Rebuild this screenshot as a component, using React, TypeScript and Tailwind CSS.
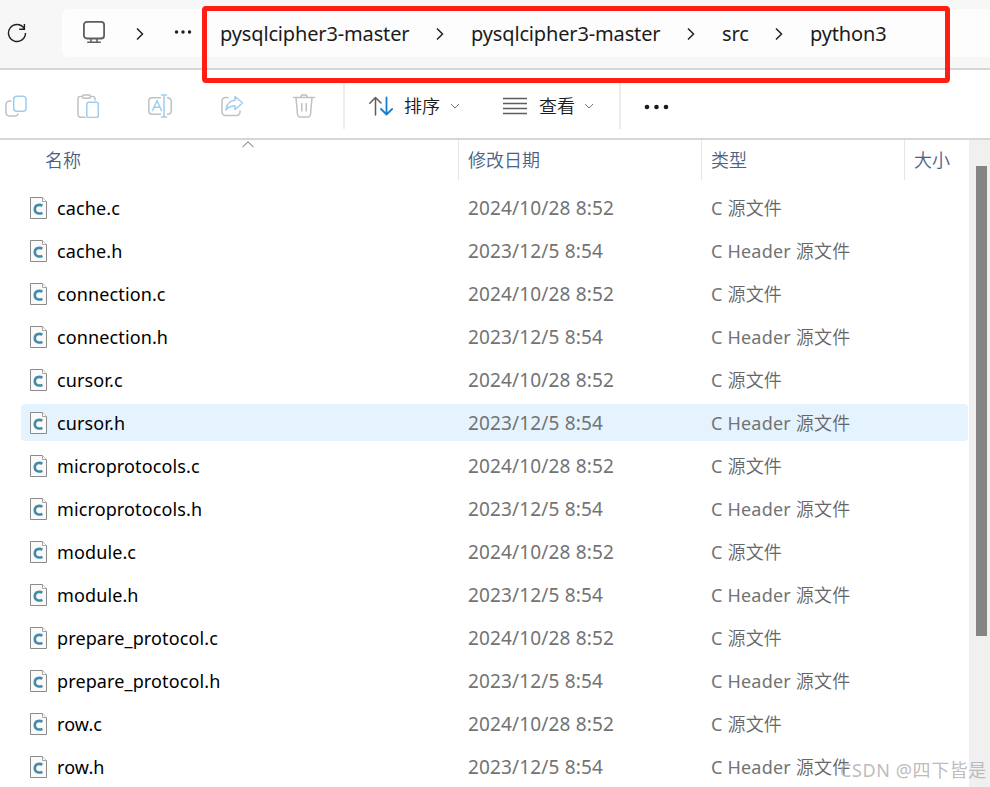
import type { ReactNode } from 'react';

const CRUMBS = [
  { label: 'pysqlcipher3-master', label_w: 'w-[189px]', gap: 'w-[62px]' },
  { label: 'pysqlcipher3-master', label_w: 'w-[189px]', gap: 'w-[62px]' },
  { label: 'src', label_w: 'w-[26px]', gap: 'w-[62px]' },
  { label: 'python3', label_w: 'w-[77px]', gap: '' },
];

const MODULES = [
  'cache',
  'connection',
  'cursor',
  'microprotocols',
  'module',
  'prepare_protocol',
  'row',
];

const FILES = MODULES.flatMap((name) => [
  { name: `${name}.c`, date: '2024/10/28 8:52', lang: 'C ' },
  { name: `${name}.h`, date: '2023/12/5 8:54', lang: 'C Header ' },
]);

function Icon({ className = '', children }: { className?: string; children: ReactNode }) {
  return (
    <svg
      width="24"
      height="24"
      viewBox="0 0 24 24"
      fill="none"
      stroke="#c1c1c1"
      strokeWidth="1.5"
      strokeLinecap="round"
      strokeLinejoin="round"
      className={`shrink-0 ${className}`}
    >
      {children}
    </svg>
  );
}

function CrumbArrow() {
  return (
    <svg width="8" height="14" viewBox="0 0 8 14" fill="none" stroke="#222" strokeWidth="1.5" className="shrink-0">
      <path d="M1 1.5 6.5 7 1 12.5" />
    </svg>
  );
}

function DropArrow() {
  return (
    <svg width="10" height="6" viewBox="0 0 10 6" fill="none" stroke="#777" strokeWidth="1" className="shrink-0">
      <path d="M1 1 5 5 9 1" />
    </svg>
  );
}

function FileIcon() {
  return (
    <svg width="17" height="22" viewBox="0 0 17 22" className="shrink-0">
      <path d="M.5.5H12.5L16.5 4.5V21.5H.5Z" fill="#fafafa" stroke="#8b8b8b" />
      <path d="M12.5.5V4.5H16.5" fill="#fff" stroke="#a5a5a5" />
      <path
        d="M12.4 8.6C9 6.9 4.8 8.2 4.8 12.2 4.8 16.2 9 17.5 12.4 15.8"
        fill="none"
        stroke="#448aa9"
        strokeWidth="2.6"
      />
    </svg>
  );
}

function AddressBar() {
  return (
    <header className="flex h-[70px] shrink-0 border-b-2 border-[#d6d6d6] bg-[#f7f7f7] pt-[9px]">
      <div className="w-[62px] shrink-0 pt-[13px] pl-[6px]">
        <svg width="22" height="22" viewBox="0 0 22 22" fill="none" stroke="#1f1f1f" strokeWidth="1.4">
          <path d="M18 6.2A8.5 8.5 0 1 0 19.5 11M18.4 2V7.2H13.2" />
        </svg>
      </div>
      <div className="flex h-12 flex-1 items-center rounded-l-md bg-[#fdfdfd] pl-5">
        <svg
          width="24"
          height="24"
          viewBox="0 0 24 24"
          fill="none"
          stroke="#5e5e5e"
          strokeWidth="1.8"
          className="relative -top-px shrink-0"
        >
          <rect x="1.9" y="1.9" width="20.2" height="16.6" rx="3" />
          <path d="M9 18.5V22M15 18.5V22M5.2 22.2H18.8" strokeWidth="1.5" />
        </svg>
        <div className="flex w-[67px] justify-center pt-[2px]">
          <CrumbArrow />
        </div>
        <svg width="18" height="4" viewBox="0 0 18 4" fill="#1b1b1b" className="relative -top-px mr-[28px] ml-px shrink-0">
          <circle cx="2.5" cy="2" r="1.7" />
          <circle cx="9" cy="2" r="1.7" />
          <circle cx="15.5" cy="2" r="1.7" />
        </svg>
        {CRUMBS.map((crumb, i) => (
          <div key={i} className="flex items-center pt-[2px]">
            <span className={`${crumb.label_w} whitespace-nowrap text-[20px] tracking-[-0.15px] text-[#1b1b1b]`}>
              {crumb.label}
            </span>
            {crumb.gap && (
              <div className={`${crumb.gap} flex justify-center pr-px`}>
                <CrumbArrow />
              </div>
            )}
          </div>
        ))}
      </div>
    </header>
  );
}

function Toolbar() {
  return (
    <div className="flex h-[70px] shrink-0 items-center border-b-2 border-[#d6d6d6] bg-white pt-[4px] pl-1">
      <div className="flex gap-12">
        <Icon>
          <path d="M7 7H5.5A3.5 3.5 0 0 0 2 10.5V18.5A3.5 3.5 0 0 0 5.5 22H11.5A3 3 0 0 0 14 20" />
          <rect x="9.7" y="2.2" width="12.3" height="15" rx="3" stroke="#9fcdf0" />
        </Icon>
        <Icon>
          <path d="M9 23.3H4.5A2.5 2.5 0 0 1 2 20.8V4A2 2 0 0 1 4 2.5H6.5M14.5 2.5H17A2 2 0 0 1 19 4V6" />
          <rect x="6.5" y="1" width="8" height="3.2" rx="1.5" />
          <rect x="10.8" y="8.2" width="11.5" height="15.2" rx="2" stroke="#9fcdf0" />
        </Icon>
        <Icon>
          <path d="M12.5 3.7H4A3.3 3.3 0 0 0 .8 7V17A3.3 3.3 0 0 0 4 20.2H12.5M19.5 3.7A3.5 3.5 0 0 1 23.2 7V17A3.5 3.5 0 0 1 19.5 20.2" />
          <path d="M4.5 16.5 9 6.5 13.5 16.5M6 13.3H12M16 1V23M13.5 1H18.5M13.5 23H18.5" stroke="#9fcdf0" />
        </Icon>
        <Icon>
          <path d="M8 3.5H5.5A3.5 3.5 0 0 0 2 7V18A3.5 3.5 0 0 0 5.5 21.5H16.5A3.5 3.5 0 0 0 20 18V17" />
          <path
            d="M15 2.5 22.5 9 15 15.5V12C11 11.8 8.2 13 6 16 6.6 10.5 9.3 6.8 15 6.3Z"
            stroke="#9fcdf0"
          />
        </Icon>
        <Icon>
          <path d="M1.5 3.5H22.5M4 3.5 5.5 20.5A3 3 0 0 0 8 23H16A3 3 0 0 0 18.5 20.5L20 3.5M8.8 3.3A3.2 2.5 0 0 1 15.2 3.3M9.8 9.5V17M14.2 9.5V17" />
        </Icon>
      </div>
      <div className="ml-[27px] h-[46px] w-[2px] bg-[#ededed]" />
      <Icon className="ml-6">
        <path d="M6.5 21V3.5M.8 9.2 6.5 3.5 12 9" stroke="#5e5e5e" />
        <path d="M17.5 3.5V20.5M12 15 17.5 20.5 23.2 15" stroke="#1180d4" strokeWidth="1.8" />
      </Icon>
      <span className="ml-[11px] w-9 text-[18px] font-[350] whitespace-nowrap text-[#1b1b1b]">排序</span>
      <div className="ml-[10px] flex">
        <DropArrow />
      </div>
      <Icon className="ml-[43px]">
        <path d="M0 4.5H24M0 9.5H24M0 14.5H24M0 19.5H24" stroke="#5e5e5e" strokeLinecap="butt" />
      </Icon>
      <span className="ml-3 w-9 text-[18px] font-[350] whitespace-nowrap text-[#1b1b1b]">查看</span>
      <div className="ml-[9px] flex">
        <DropArrow />
      </div>
      <div className="ml-[25px] h-[46px] w-[2px] bg-[#ededed]" />
      <svg width="26" height="6" viewBox="0 0 26 6" fill="#1b1b1b" className="relative top-px ml-[23px]">
        <circle cx="3" cy="3" r="2.3" />
        <circle cx="12.5" cy="3" r="2.3" />
        <circle cx="22" cy="3" r="2.3" />
      </svg>
    </div>
  );
}

function FileList() {
  return (
    <div className="w-[969px] shrink-0">
      <div className="flex h-10 text-[18px] leading-[41px] font-[350] text-[#4a6184]">
        <div className="relative w-[458px] pl-[45px]">
          名称
          <svg width="12" height="7" viewBox="0 0 12 7" fill="none" stroke="#666" className="absolute top-px left-[242px]">
            <path d="M.5 6 6 .8 11.5 6" />
          </svg>
        </div>
        <div className="w-[243px] border-l border-[#e5e5e5] pl-[9px]">修改日期</div>
        <div className="w-[203px] border-l border-[#e5e5e5] pl-[9px]">类型</div>
        <div className="border-l border-[#e5e5e5] pl-[9px]">大小</div>
      </div>
      <div className="flex flex-col gap-[6px] pt-[9px] pl-[21px]">
        {FILES.map((file) => (
          <div
            key={file.name}
            className={`flex h-[37px] w-[947px] shrink-0 items-center rounded-sm pl-[9px] text-[18px] whitespace-nowrap ${
              file.name === 'cursor.h' ? 'bg-[#e5f3ff]' : ''
            }`}
          >
            <FileIcon />
            <span className="ml-[10px] w-[411px] pt-[2px] tracking-[0.12px] text-black">{file.name}</span>
            <span className="w-[243px] pt-px text-[19px] tracking-[0.15px] text-[#737373]">{file.date}</span>
            <span className="pt-[2px] tracking-[0.2px] text-[#737373]">
              {file.lang}
              <span className="font-[350] text-[#666]">源文件</span>
            </span>
          </div>
        ))}
      </div>
    </div>
  );
}

export default function App() {
  return (
    <div className="relative flex h-[787px] w-[990px] flex-col overflow-hidden bg-white font-['Noto_Sans','Noto_Sans_CJK_SC',sans-serif]">
      <AddressBar />
      <Toolbar />
      <main className="flex min-h-0 flex-1 overflow-hidden">
        <FileList />
        <div className="flex-1 bg-[#f0f0f0] pt-[26px] pl-[7px]">
          <div className="h-[470px] w-[11px] bg-[#858585]" />
        </div>
      </main>

      <div className="absolute top-[6px] left-[202px] h-[77px] w-[748px] rounded-[4px] border-5 border-[#ff1e14]" />
      <div className="absolute top-[757px] left-[840px] text-[18px] leading-[27px] tracking-[0.6px] whitespace-nowrap text-[#b4b4b4]/90">
        CSDN @四下皆是
      </div>
    </div>
  );
}
